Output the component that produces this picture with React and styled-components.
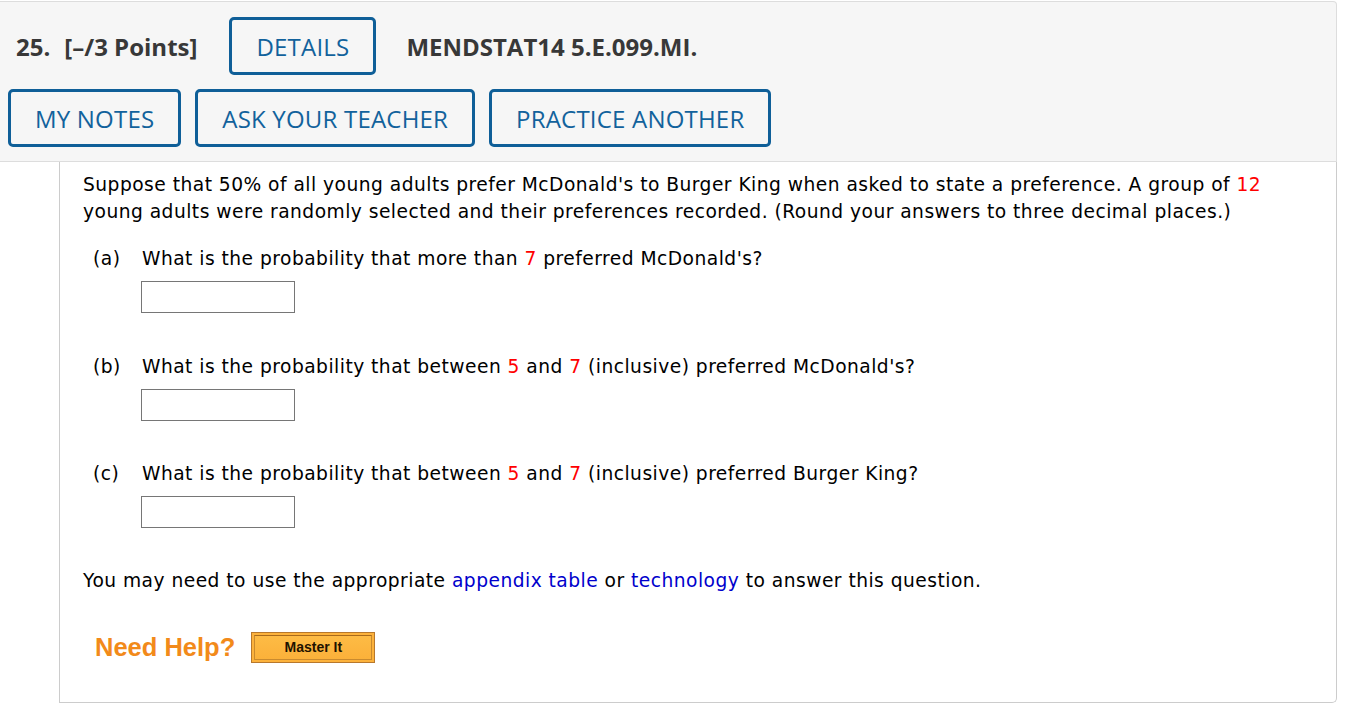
import React from 'react';
import styled, { createGlobalStyle } from 'styled-components';

const GlobalStyle = createGlobalStyle`
  body {
    margin: 0;
    background: #fff;
    font-family: 'Open Sans', sans-serif;
  }
`;

const Page = styled.div`
  width: 1337px;
  padding-top: 1px;
`;

const Header = styled.div`
  background: #f6f6f6;
  border: 1px solid #dddddd;
  border-left: none;
  border-top-right-radius: 4px;
  padding: 15px 0 14px 8px;
  display: flex;
  flex-direction: column;
  gap: 14px;
`;

const Row = styled.div`
  display: flex;
  align-items: center;
  gap: ${p => p.$gap ?? 14}px;
`;

const Heading = styled.span`
  font-size: 24px;
  font-weight: 700;
  color: #383838;
  margin-left: ${p => p.$left || 0}px;
  margin-right: ${p => p.$right || 0}px;
`;

const OutlineButton = styled.button`
  height: 58px;
  padding: 0 24px;
  border: 3px solid #0f5f98;
  border-radius: 5px;
  background: transparent;
  color: #12629c;
  font-family: 'Open Sans', sans-serif;
  font-size: 24px;
  font-weight: 400;
  letter-spacing: 0.2px;
  cursor: pointer;
`;

const Body = styled.div`
  margin-left: 59px;
  border-left: 1px solid #cccccc;
  border-right: 1px solid #cccccc;
  border-bottom: 1px solid #cccccc;
  border-bottom-right-radius: 5px;
  padding: 9px 23px 39px 23px;
  font-family: 'DejaVu Sans', sans-serif;
  font-size: 18.67px;
  letter-spacing: 0.47px;
  line-height: 27px;
  color: #000;
`;

const Para = styled.p`
  margin: 0;
  margin-top: ${p => p.$top || 0}px;
`;

const Red = styled.span`
  color: #ff0000;
`;

const Link = styled.a`
  color: #0000cc;
  text-decoration: none;
`;

const Part = styled.div`
  margin-top: ${p => p.$top}px;
  padding-left: 10px;
`;

const PartLine = styled.div`
  display: flex;
`;

const PartLabel = styled.span`
  width: 49px;
  flex: none;
`;

const AnswerBox = styled.input`
  display: block;
  margin: 9px 0 0 48px;
  width: 154px;
  height: 32px;
  box-sizing: border-box;
  border: 1px solid #767676;
  background: #fff;
`;

const HelpRow = styled.div`
  display: flex;
  align-items: center;
  gap: 16px;
  margin-top: 38px;
  padding-left: 12px;
`;

const NeedHelp = styled.span`
  font-family: 'Liberation Sans', Arial, sans-serif;
  font-weight: 700;
  font-size: 25.5px;
  letter-spacing: 0;
  color: #f28a1a;
`;

const MasterButton = styled.button`
  width: 124px;
  height: 31px;
  border: 1px solid #b8782c;
  background: #fcb23c;
  padding: 2px;
  box-sizing: border-box;
  cursor: pointer;
  display: flex;
`;

const MasterInner = styled.span`
  flex: 1;
  border: 1px solid #c98a2e;
  border-top-color: #a86a1c;
  background: linear-gradient(#fdbb45, #fbb13a);
  font-family: 'Liberation Sans', Arial, sans-serif;
  font-weight: 700;
  font-size: 14px;
  line-height: 23px;
  letter-spacing: 0;
  color: #1f1300;
  text-align: center;
`;

export default function App() {
  return (
    <Page>
      <GlobalStyle />
      <Header>
        <Row $gap={0}>
          <Heading $left={8} $right={14}>25.</Heading>
          <Heading $right={32}>[–/3 Points]</Heading>
          <OutlineButton>DETAILS</OutlineButton>
          <Heading $left={30}>MENDSTAT14 5.E.099.MI.</Heading>
        </Row>
        <Row>
          <OutlineButton>MY NOTES</OutlineButton>
          <OutlineButton>ASK YOUR TEACHER</OutlineButton>
          <OutlineButton>PRACTICE ANOTHER</OutlineButton>
        </Row>
      </Header>
      <Body>
        <Para>
          Suppose that 50% of all young adults prefer McDonald's to Burger King when asked to state a preference. A group of <Red>12</Red> young adults were randomly selected and their preferences recorded. (Round your answers to three decimal places.)
        </Para>
        <Part $top={20}>
          <PartLine>
            <PartLabel>(a)</PartLabel>
            <span>What is the probability that more than <Red>7</Red> preferred McDonald's?</span>
          </PartLine>
          <AnswerBox type="text" />
        </Part>
        <Part $top={40}>
          <PartLine>
            <PartLabel>(b)</PartLabel>
            <span>What is the probability that between <Red>5</Red> and <Red>7</Red> (inclusive) preferred McDonald's?</span>
          </PartLine>
          <AnswerBox type="text" />
        </Part>
        <Part $top={39}>
          <PartLine>
            <PartLabel>(c)</PartLabel>
            <span>What is the probability that between <Red>5</Red> and <Red>7</Red> (inclusive) preferred Burger King?</span>
          </PartLine>
          <AnswerBox type="text" />
        </Part>
        <Para $top={39}>
          You may need to use the appropriate <Link>appendix table</Link> or <Link>technology</Link> to answer this question.
        </Para>
        <HelpRow>
          <NeedHelp>Need Help?</NeedHelp>
          <MasterButton>
            <MasterInner>Master It</MasterInner>
          </MasterButton>
        </HelpRow>
      </Body>
    </Page>
  );
}
